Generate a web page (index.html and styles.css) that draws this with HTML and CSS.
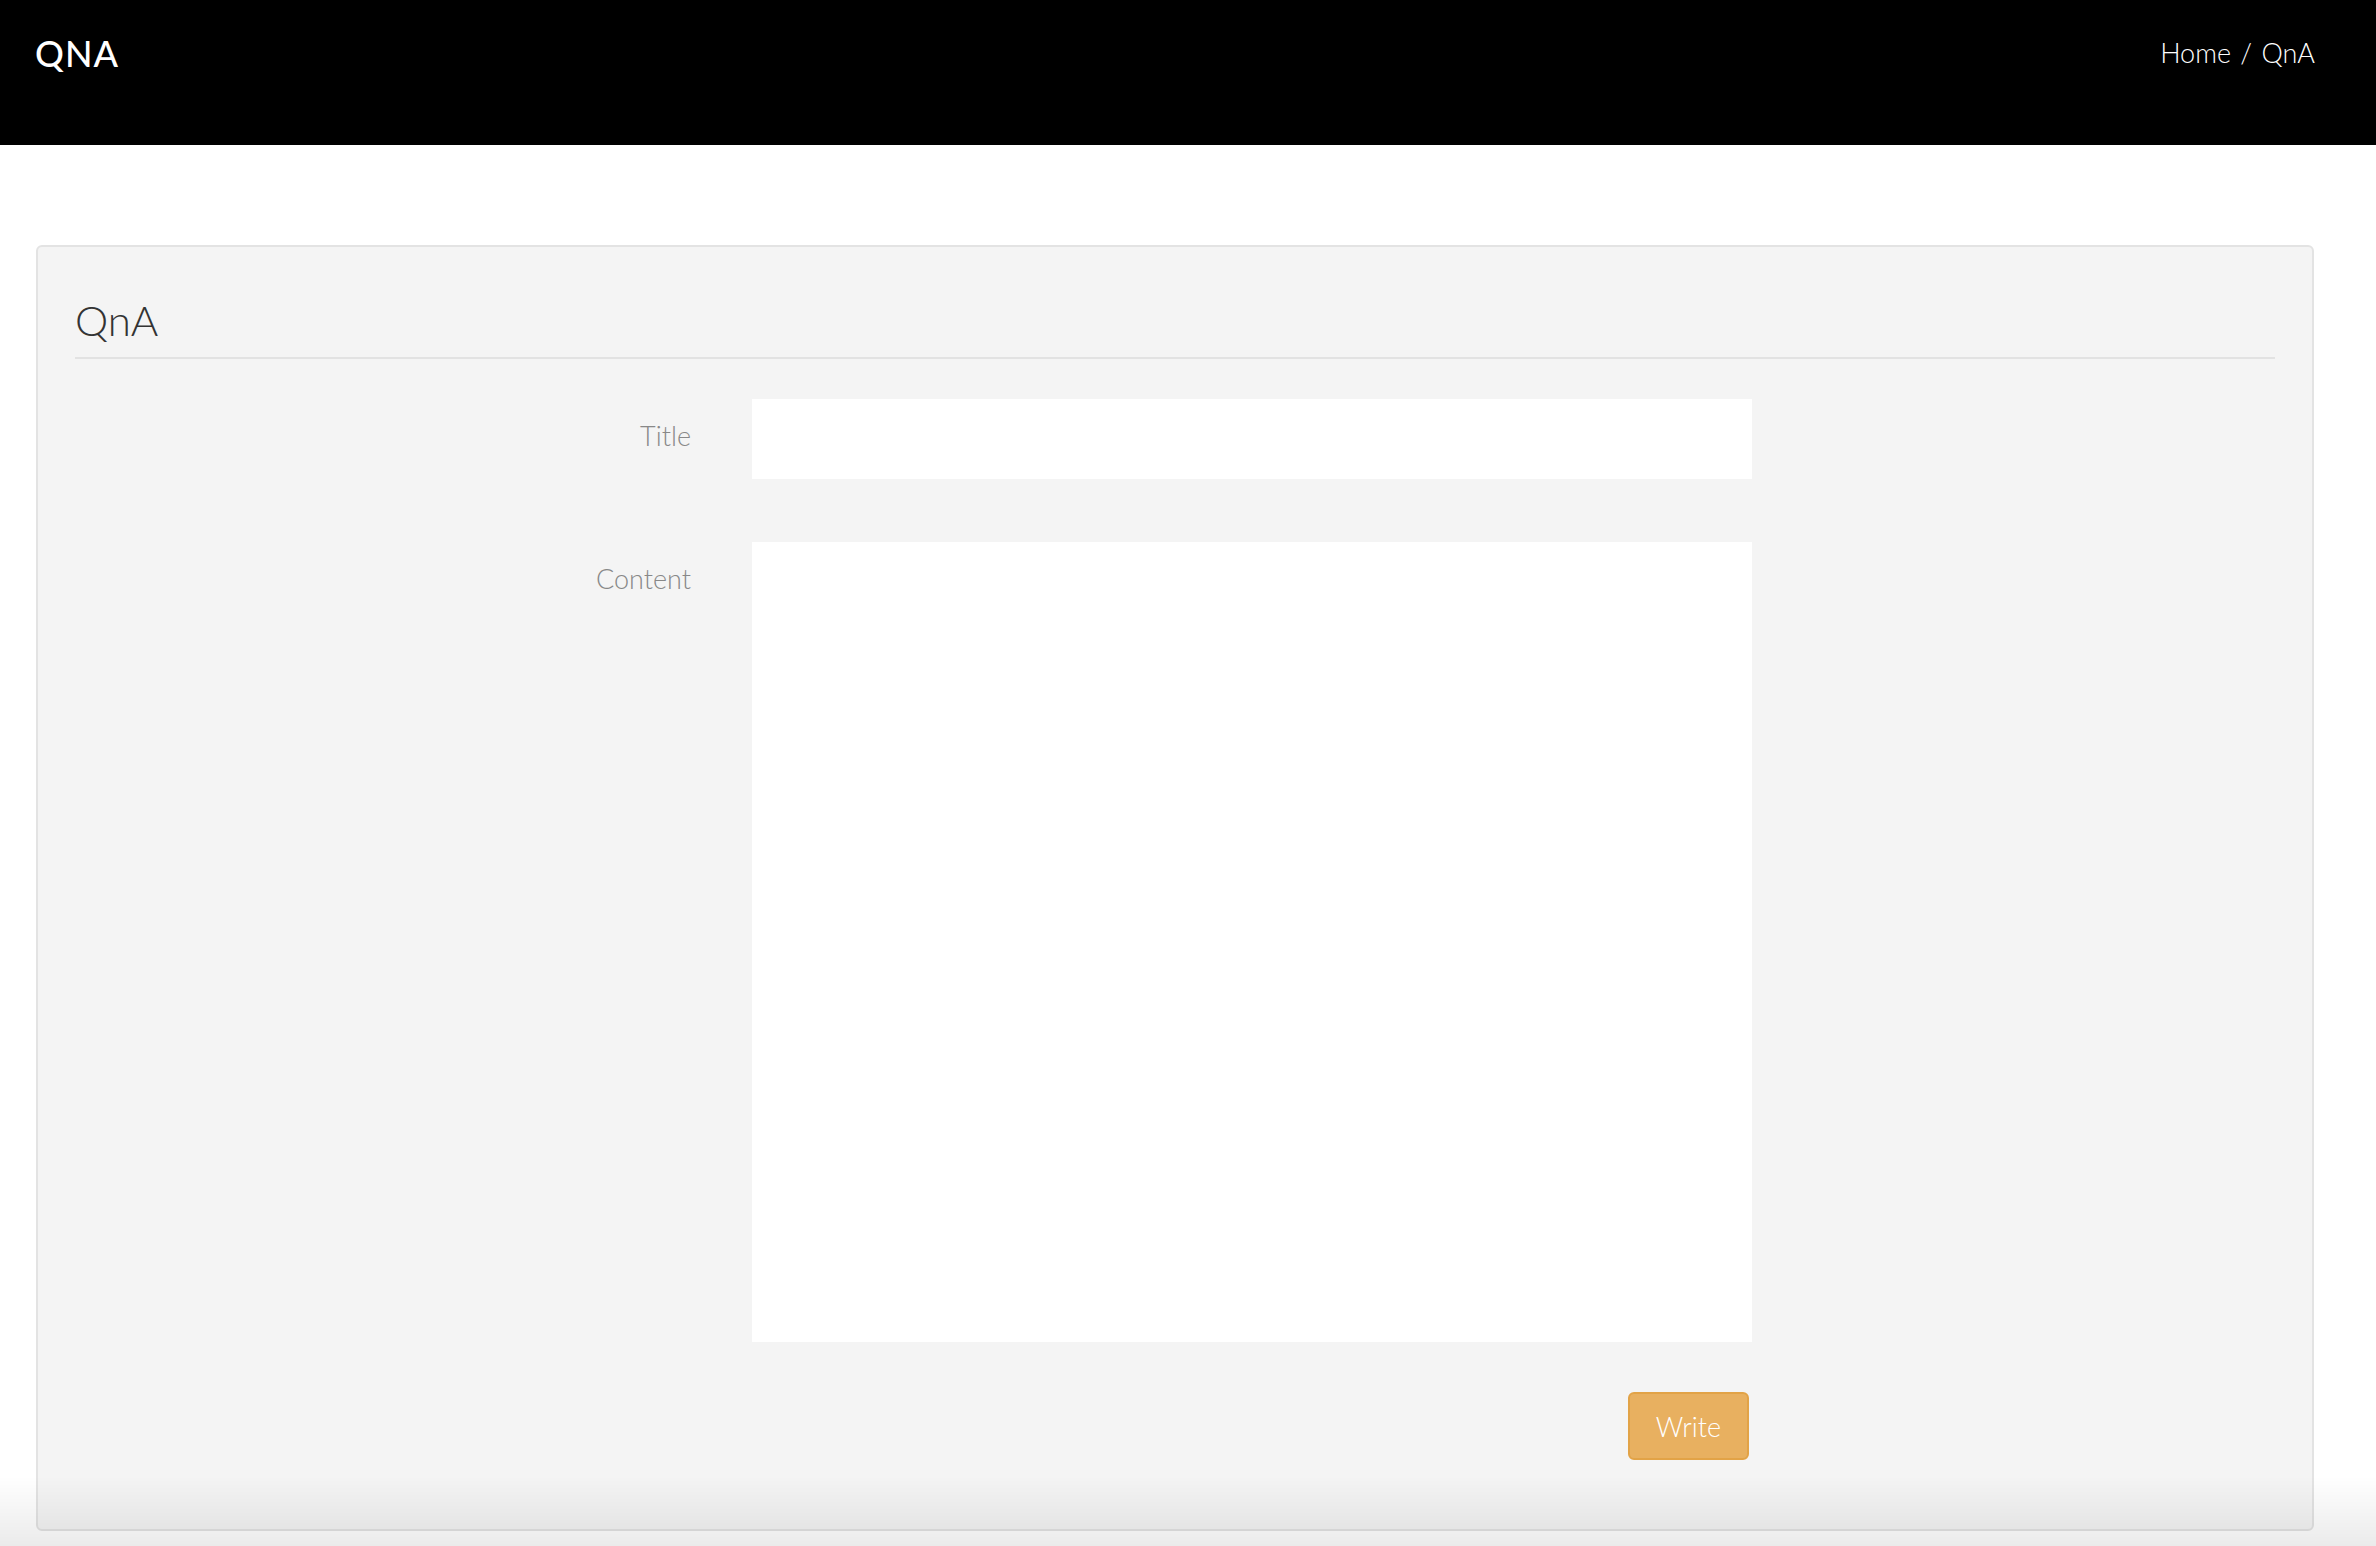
FILE: index.html
```html
<!DOCTYPE html>
<html lang="en">
<head>
<meta charset="utf-8">
<title>QnA</title>
<link rel="stylesheet" href="styles.css">
</head>
<body>
<header class="topbar">
  <div class="brand">QNA</div>
  <nav class="crumbs">Home / QnA</nav>
</header>
<main class="page">
  <section class="panel">
    <h1 class="panel-title">QnA</h1>
    <form class="qna-form">
      <label class="field-label" for="title">Title</label>
      <input class="field-input" id="title" type="text">
      <label class="field-label" for="content">Content</label>
      <textarea class="field-area" id="content"></textarea>
      <div class="actions">
        <button type="button" class="btn-write">Write</button>
      </div>
    </form>
  </section>
</main>
<div class="bottom-fade"></div>
</body>
</html>
```

FILE: styles.css
```css
html, body {
  margin: 0;
  padding: 0;
  background: #ffffff;
}
body {
  font-family: "Lato", "Open Sans", "Liberation Sans", sans-serif;
  color: #333;
}
.topbar {
  background: #000;
  height: 145px;
  box-sizing: border-box;
  padding: 32px 61px 0 35px;
  display: flex;
  justify-content: space-between;
  align-items: flex-start;
}
.brand {
  color: #fff;
  font-size: 36px;
  font-weight: 500;
  line-height: 1.2;
  letter-spacing: 1px;
}
.crumbs {
  color: #fff;
  font-size: 27px;
  font-weight: 300;
  line-height: 1.2;
  margin-top: 5px;
  word-spacing: 2px;
}
.page {
  padding: 100px 62px 17px 36px;
}
.panel {
  background: #f4f4f4;
  border: 2px solid #e3e3e3;
  border-radius: 6px;
  padding: 48px 37px 69px 37px;
}
.panel-title {
  margin: 0;
  font-size: 42px;
  font-weight: 300;
  line-height: 1.2;
  color: #333;
  padding-bottom: 12px;
  border-bottom: 2px solid #e2e2e2;
}
.qna-form {
  display: grid;
  grid-template-columns: 616px 1000px;
  column-gap: 61px;
  row-gap: 63px;
  margin-top: 40px;
}
.field-label {
  text-align: right;
  font-size: 27px;
  font-weight: 300;
  line-height: 1.2;
  color: #888;
  padding-top: 21px;
}
.field-input,
.field-area {
  display: block;
  box-sizing: border-box;
  width: 1000px;
  border: 0;
  background: #fff;
  margin: 0;
  padding: 0 16px;
  font-family: inherit;
  font-size: 27px;
  outline: none;
}
.field-input {
  height: 80px;
}
.field-area {
  height: 800px;
  resize: none;
}
.actions {
  grid-column: 2;
  display: flex;
  justify-content: flex-end;
  margin-top: -13px;
  padding-right: 3px;
}
.btn-write {
  width: 121px;
  height: 68px;
  box-sizing: border-box;
  background: #e8b060;
  border: 2px solid #e2a347;
  border-radius: 6px;
  color: #fff;
  font-family: inherit;
  font-size: 27px;
  font-weight: 300;
  padding: 0;
}
.bottom-fade {
  position: fixed;
  left: 0;
  right: 0;
  bottom: 0;
  height: 70px;
  pointer-events: none;
  background: linear-gradient(to bottom, rgba(0,0,0,0), rgba(0,0,0,0.08));
}
```
